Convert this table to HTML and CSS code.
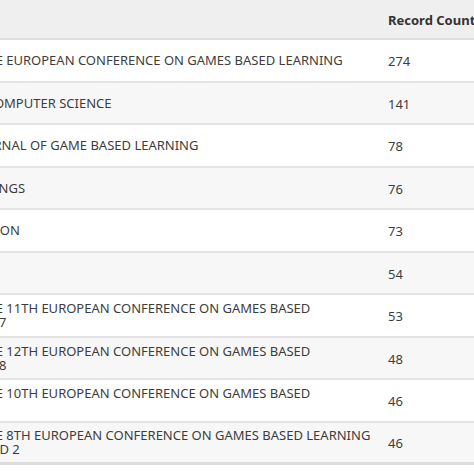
FILE: index.html
```html
<!DOCTYPE html>
<html lang="en">
<head>
<meta charset="utf-8">
<title>Source Titles</title>
<link rel="stylesheet" href="styles.css">
</head>
<body>
<div class="frame">
  <table class="results">
    <colgroup>
      <col class="col-title">
      <col class="col-count">
    </colgroup>
    <thead>
      <tr>
        <th class="title">Source Titles</th>
        <th class="count">Record Count</th>
      </tr>
    </thead>
    <tbody>
      <tr><td class="title">PROCEEDINGS OF THE EUROPEAN CONFERENCE ON GAMES BASED LEARNING</td><td class="count">274</td></tr>
      <tr><td class="title">LECTURE NOTES IN COMPUTER SCIENCE</td><td class="count">141</td></tr>
      <tr><td class="title">INTERNATIONAL JOURNAL OF GAME BASED LEARNING</td><td class="count">78</td></tr>
      <tr><td class="title">EDULEARN PROCEEDINGS</td><td class="count">76</td></tr>
      <tr><td class="title">COMPUTERS EDUCATION</td><td class="count">73</td></tr>
      <tr><td class="title">SERIOUS GAMES</td><td class="count">54</td></tr>
      <tr><td class="title">PROCEEDINGS OF THE 11TH EUROPEAN CONFERENCE ON GAMES BASED LEARNING ECGBL 2017</td><td class="count">53</td></tr>
      <tr><td class="title">PROCEEDINGS OF THE 12TH EUROPEAN CONFERENCE ON GAMES BASED LEARNING ECGBL 2018</td><td class="count">48</td></tr>
      <tr><td class="title">PROCEEDINGS OF THE 10TH EUROPEAN CONFERENCE ON GAMES BASED LEARNING</td><td class="count">46</td></tr>
      <tr><td class="title">PROCEEDINGS OF THE 8TH EUROPEAN CONFERENCE ON GAMES BASED LEARNING ECGBL 2014 VOL 1 AND 2</td><td class="count">46</td></tr>
    </tbody>
  </table>
</div>
</body>
</html>
```
FILE: styles.css
```css
html, body {
  margin: 0;
  padding: 0;
  background: #ffffff;
}

.frame {
  width: 474px;
  height: 474px;
  overflow: hidden;
}

.results {
  margin-left: -142px;
  border-collapse: separate;
  border-spacing: 0;
  table-layout: fixed;
  width: 700px;
  font-family: "Noto Sans", "Open Sans", sans-serif;
  font-size: 13px;
  line-height: 14px;
  color: #3d3d3d;
}

.col-title { width: 522px; }
.col-count { width: 178px; }

.results th,
.results td {
  box-sizing: border-box;
  padding: 0 6px 0 8px;
  text-align: left;
  vertical-align: middle;
}

.results th {
  height: 40px;
  padding-top: 1px;
  background: #efefef;
  border-bottom: 2px solid #dedede;
  font-weight: 700;
  color: #333333;
  white-space: nowrap;
}

.results td {
  height: 42.5px;
  border-bottom: 2px solid #e4e4e4;
}

.results td.count {
  padding-top: 2px;
}

.results tbody tr:nth-child(even) td {
  background: #f7f7f7;
}

.results tbody tr:last-child td {
  border-bottom: 3px solid #dcdcdc;
}
```
